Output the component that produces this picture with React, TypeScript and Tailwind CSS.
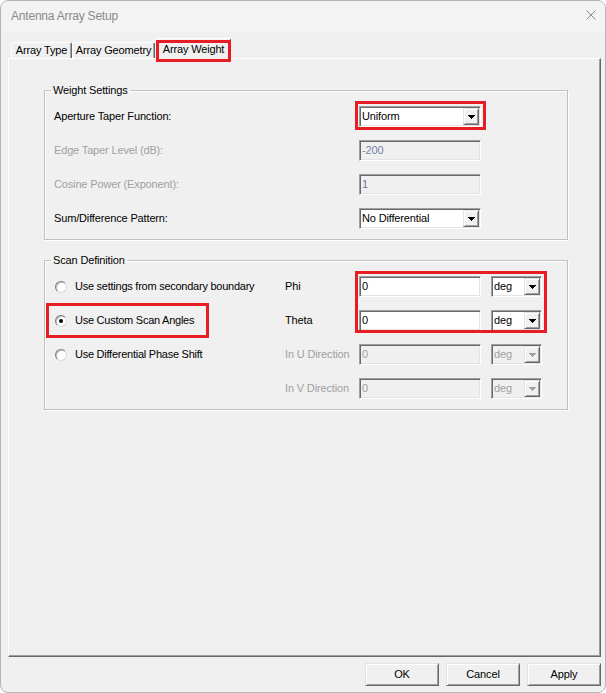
import React from "react";

const sunken =
  "border border-t-[#a0a0a0] border-l-[#a0a0a0] border-r-white border-b-white shadow-[inset_1px_1px_0_#696969,inset_-1px_-1px_0_#e3e3e3]";
const raised =
  "border border-t-[#e3e3e3] border-l-[#e3e3e3] border-r-[#696969] border-b-[#696969] shadow-[inset_1px_1px_0_#ffffff,inset_-1px_-1px_0_#a0a0a0]";

function Arrow({ disabled }: { disabled?: boolean }) {
  return (
    <svg width="7" height="4" viewBox="0 0 7 4" shapeRendering="crispEdges">
      <path
        d="M0 0h7v1h-1v1h-1v1h-1v1h-1v-1h-1v-1h-1v-1h-1z"
        fill={disabled ? "#a0a0a0" : "#000000"}
      />
    </svg>
  );
}

function Combo({
  value,
  width,
  disabled,
}: {
  value: string;
  width: string;
  disabled?: boolean;
}) {
  return (
    <div
      className={`${sunken} flex h-[21px] ${width} ${
        disabled ? "bg-[#f0f0f0] text-[#a0a0a0]" : "bg-white text-black"
      }`}
    >
      <div className="flex flex-1 items-center pl-[2px] leading-none">{value}</div>
      <div
        className={`${raised} m-[1px] flex w-[16px] items-center justify-center bg-[#f0f0f0]`}
      >
        <Arrow disabled={disabled} />
      </div>
    </div>
  );
}

function Edit({
  value,
  bg,
  color,
}: {
  value: string;
  bg: string;
  color: string;
}) {
  return (
    <div
      className={`${sunken} flex h-[21px] w-[122px] items-center pl-[2px] leading-none ${bg} ${color}`}
    >
      {value}
    </div>
  );
}

function Radio({ checked }: { checked?: boolean }) {
  return (
    <div className="flex h-[12px] w-[12px] shrink-0 items-center justify-center rounded-full border border-t-[#7a7a7a] border-l-[#7a7a7a] border-r-[#d8d8d8] border-b-[#d8d8d8] bg-white shadow-[inset_1px_1px_0_#c0c0c0]">
      {checked && <div className="h-[4px] w-[4px] rounded-full bg-black" />}
    </div>
  );
}

function RedBox({ className }: { className: string }) {
  return (
    <div
      className={`pointer-events-none absolute border-[3px] border-[#e81c24] ${className}`}
    />
  );
}

function Tab({
  label,
  width,
}: {
  label: string;
  width: string;
}) {
  return (
    <div
      className={`flex h-[16px] ${width} items-center justify-center rounded-t-[2px] border-t border-l border-r border-t-white border-l-white border-r-[#696969] shadow-[inset_-1px_0_0_#a0a0a0] leading-none`}
    >
      {label}
    </div>
  );
}

function DialogButton({ label }: { label: string }) {
  return (
    <div
      className={`${raised} flex h-[23px] w-[74px] items-center justify-center bg-[#f0f0f0] leading-none`}
    >
      {label}
    </div>
  );
}

export default function App() {
  return (
    <div className="h-[693px] w-[606px] bg-white font-['Liberation_Sans',Arial,sans-serif] text-[11px] tracking-[-0.15px] text-black">
      <div className="flex h-full w-full flex-col overflow-hidden rounded-[8px] border border-[#b4b4b4] bg-[#f0f0f0]">
        {/* Title bar */}
        <div className="flex h-[30px] shrink-0 items-center justify-between bg-[#f3f3f3] pl-[10px] pr-[9px]">
          <span className="text-[12px] leading-none tracking-[-0.2px] text-[#8a8a8a]">
            Antenna Array Setup
          </span>
          <svg width="10" height="10" viewBox="0 0 10 10" className="mb-[2px]">
            <path d="M0.5 0.5L9.5 9.5M9.5 0.5L0.5 9.5" stroke="#8a8a8a" strokeWidth="1" />
          </svg>
        </div>

        {/* Tabs */}
        <div className="relative z-10 ml-[10px] mt-[7px] flex h-[20px] items-end">
          <Tab label="Array Type" width="w-[61px]" />
          <Tab label="Array Geometry" width="w-[83px]" />
          <div className="relative -mb-[1px] ml-[1px] flex h-[21px] w-[75px] items-start justify-center rounded-t-[2px] border-t border-l border-r border-t-white border-l-white border-r-[#696969] bg-[#f0f0f0] pt-[5px] leading-none">
            Array Weight
            <RedBox className="left-[-1px] top-[1px] right-[-1px] bottom-[-3px]" />
          </div>
        </div>

        {/* Tab panel */}
        <div className="ml-[7px] h-[599px] w-[593px] shrink-0 border border-t-white border-l-white border-r-[#696969] border-b-[#696969] pt-[24px] shadow-[inset_-1px_-1px_0_#a0a0a0]">
          {/* Weight Settings */}
          <fieldset className="ml-[35px] w-[524px] border border-[#c0c0c0] shadow-[inset_1px_1px_0_#ffffff,1px_1px_0_#ffffff]">
            <legend className="ml-[6px] px-[2px] leading-[14px]">Weight Settings</legend>
            <div className="grid grid-cols-[305px_122px] gap-y-[13px] pb-[10px] pl-[9px] pt-[9px]">
              <div className="flex h-[21px] items-center">Aperture Taper Function:</div>
              <div className="relative">
                <Combo value="Uniform" width="w-[122px]" />
                <RedBox className="left-[-4px] top-[-5px] right-[-5px] bottom-[-3px]" />
              </div>

              <div className="flex h-[21px] items-center text-[#a0a0a0]">Edge Taper Level (dB):</div>
              <Edit value="-200" bg="bg-[#f0f0f0]" color="text-[#7683a3]" />

              <div className="flex h-[21px] items-center text-[#a0a0a0]">Cosine Power (Exponent):</div>
              <Edit value="1" bg="bg-[#f0f0f0]" color="text-[#76709a]" />

              <div className="flex h-[21px] items-center">Sum/Difference Pattern:</div>
              <Combo value="No Differential" width="w-[122px]" />
            </div>
          </fieldset>

          {/* Scan Definition */}
          <fieldset className="ml-[35px] mt-[13px] w-[524px] border border-[#c0c0c0] shadow-[inset_1px_1px_0_#ffffff,1px_1px_0_#ffffff]">
            <legend className="ml-[6px] px-[2px] leading-[14px]">Scan Definition</legend>
            <div className="relative grid grid-cols-[230px_74px_132px_51px] items-center gap-y-[13px] pb-[10px] pl-[10px] pt-[9px]">
              <div className="flex h-[21px] items-center gap-[8px] tracking-[-0.25px]">
                <Radio />
                <span>Use settings from secondary boundary</span>
              </div>
              <div>Phi</div>
              <Edit value="0" bg="bg-white" color="text-black" />
              <Combo value="deg" width="w-[51px]" />

              <div className="flex h-[21px] items-center gap-[8px] tracking-[-0.25px]">
                <Radio checked />
                <span>Use Custom Scan Angles</span>
              </div>
              <div>Theta</div>
              <Edit value="0" bg="bg-white" color="text-black" />
              <Combo value="deg" width="w-[51px]" />

              <div className="flex h-[21px] items-center gap-[8px] tracking-[-0.25px]">
                <Radio />
                <span>Use Differential Phase Shift</span>
              </div>
              <div className="text-[#a0a0a0]">In U Direction</div>
              <Edit value="0" bg="bg-[#f0f0f0]" color="text-[#a0a0a0]" />
              <Combo value="deg" width="w-[51px]" disabled />

              <div className="h-[21px]" />
              <div className="text-[#a0a0a0]">In V Direction</div>
              <Edit value="0" bg="bg-[#f0f0f0]" color="text-[#a0a0a0]" />
              <Combo value="deg" width="w-[51px]" disabled />

              <RedBox className="left-[1px] top-[36px] h-[35px] w-[163px]" />
              <RedBox className="left-[310px] top-[4px] h-[62px] w-[192px]" />
            </div>
          </fieldset>
        </div>

        {/* Dialog buttons */}
        <div className="mt-[6px] flex justify-end gap-[7px] pr-[4px]">
          <DialogButton label="OK" />
          <DialogButton label="Cancel" />
          <DialogButton label="Apply" />
        </div>
      </div>
    </div>
  );
}
